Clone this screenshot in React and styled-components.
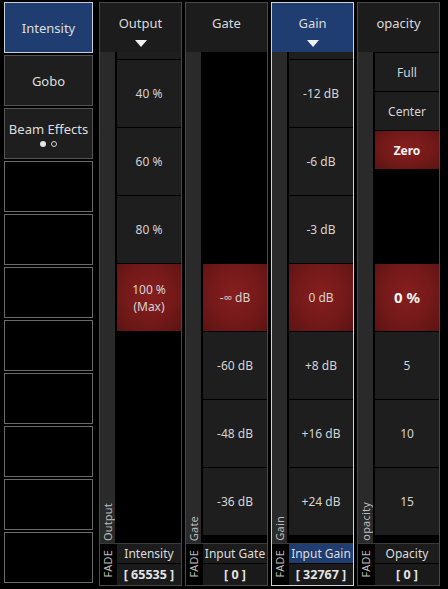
import React from "react";
import styled, { createGlobalStyle } from "styled-components";

const GlobalStyle = createGlobalStyle`
  html, body {
    margin: 0;
    padding: 0;
    background: #000;
    overflow: hidden;
  }
  body {
    font-family: "Noto Sans", "Open Sans", sans-serif;
    color: #d6d6d6;
  }
`;

const Page = styled.div`
  display: flex;
  gap: 6px;
  padding: 2px 0 0 4px;
  width: 448px;
  height: 589px;
  box-sizing: border-box;
`;

const Tabs = styled.div`
  display: flex;
  flex-direction: column;
  gap: 2px;
  width: 89px;
`;

const Tab = styled.div`
  height: 51px;
  box-sizing: border-box;
  border: 1px solid ${(p) => (p.$active ? "#c9cfda" : p.$empty ? "#6a6a6a" : "#555")};
  background: ${(p) => (p.$active ? "#1f3d70" : p.$empty ? "#000" : "#1e1e1e")};
  color: #dedede;
  font-size: 13px;
  display: flex;
  flex-direction: column;
  align-items: center;
  justify-content: center;
`;

const Dots = styled.div`
  display: flex;
  align-items: center;
  gap: 5px;
  margin-top: 3px;
`;

const Dot = styled.span`
  width: ${(p) => (p.$on ? 6 : 4)}px;
  height: ${(p) => (p.$on ? 6 : 4)}px;
  border-radius: 50%;
  background: ${(p) => (p.$on ? "#e8e8e8" : "transparent")};
  border: ${(p) => (p.$on ? "none" : "1px solid #d0d0d0")};
`;

const Columns = styled.div`
  display: flex;
  gap: 3px;
`;

const Column = styled.div`
  width: 83px;
  height: 584px;
  box-sizing: border-box;
  border: 1px solid ${(p) => (p.$sel ? "#d2d2d2" : "#484848")};
  background: #000;
  display: flex;
  flex-direction: column;
`;

const Header = styled.div`
  height: 49px;
  flex: none;
  background: ${(p) => (p.$sel ? "#1f3d70" : "#1c1c1c")};
  display: flex;
  flex-direction: column;
  align-items: center;
  padding-top: 12px;
  box-sizing: border-box;
`;

const Title = styled.span`
  font-size: 13px;
  color: #dadada;
  line-height: 16px;
`;

const Arrow = styled.div`
  flex: none;
  width: 0;
  height: 0;
  margin-top: 9px;
  border-left: 6px solid transparent;
  border-right: 6px solid transparent;
  border-top: 7px solid #f2f2f2;
`;

const Body = styled.div`
  flex: 1;
  display: flex;
  gap: 2px;
  overflow: hidden;
`;

const Strip = styled.div`
  width: 15px;
  flex: none;
  background: ${(p) => (p.$dark ? "#000" : "#2a2a2a")};
  display: flex;
  flex-direction: column;
  justify-content: flex-end;
  align-items: center;
`;

const SideText = styled.span`
  writing-mode: vertical-rl;
  transform: rotate(180deg);
  font-size: 11px;
  color: #bdbdbd;
  padding-top: ${(p) => p.$pad || 3}px;
  line-height: 13px;
  letter-spacing: 0.2px;
`;

const List = styled.div`
  flex: 1;
  display: flex;
  flex-direction: column;
  gap: 1px;
  margin-top: ${(p) => p.$offset}px;
`;

const Cell = styled.div`
  height: ${(p) => p.$h || 67}px;
  flex: none;
  display: flex;
  align-items: center;
  justify-content: center;
  text-align: center;
  font-size: ${(p) => (p.$big ? 15 : 12)}px;
  font-weight: ${(p) => (p.$bold ? 700 : 400)};
  line-height: 17px;
  color: ${(p) => (p.$bold ? "#f4f4f4" : "#d4d4d4")};
  background: ${(p) =>
    p.$red
      ? "radial-gradient(ellipse at 50% 45%, #861e1e 0%, #741919 55%, #5c1313 100%)"
      : p.$blank
      ? "#000"
      : "#1e1e1e"};
`;

const Footer = styled.div`
  height: 41px;
  flex: none;
  border-top: 1px solid #3a3a3a;
  display: flex;
  gap: 2px;
`;

const Labels = styled.div`
  flex: 1;
  display: flex;
  flex-direction: column;
  gap: 1px;
`;

const Name = styled.div`
  height: 19px;
  background: ${(p) => (p.$sel ? "#1f3d70" : "#1c1c1c")};
  font-size: 12px;
  color: #dcdcdc;
  display: flex;
  align-items: center;
  justify-content: center;
`;

const Value = styled.div`
  flex: 1;
  background: #1a1a1a;
  font-size: 12.5px;
  font-weight: 700;
  color: #e4e4e4;
  display: flex;
  align-items: center;
  justify-content: center;
  white-space: pre;
`;

// slot 0 of each scrolled list sits mostly above the visible area, so it carries no text
const columns = [
  {
    title: "Output",
    arrow: true,
    side: "Output",
    name: "Intensity",
    value: "[ 65535 ]",
    offset: -60,
    cells: [
      {},
      { t: "40 %" },
      { t: "60 %" },
      { t: "80 %" },
      { t: ["100 %", "(Max)"], red: true },
    ],
  },
  {
    title: "Gate",
    side: "Gate",
    name: "Input Gate",
    value: "[ 0 ]",
    offset: -60,
    cells: [
      { blank: true },
      { blank: true },
      { blank: true },
      { blank: true },
      { t: "-∞ dB", red: true },
      { t: "-60 dB" },
      { t: "-48 dB" },
      { t: "-36 dB" },
    ],
  },
  {
    title: "Gain",
    arrow: true,
    sel: true,
    side: "Gain",
    name: "Input Gain",
    value: "[ 32767 ]",
    offset: -60,
    cells: [
      {},
      { t: "-12 dB" },
      { t: "-6 dB" },
      { t: "-3 dB" },
      { t: "0 dB", red: true },
      { t: "+8 dB" },
      { t: "+16 dB" },
      { t: "+24 dB" },
    ],
  },
  {
    title: "opacity",
    side: "opacity",
    name: "Opacity",
    value: "[ 0 ]",
    offset: 1,
    cells: [
      { t: "Full", h: 38 },
      { t: "Center", h: 38 },
      { t: "Zero", h: 38, red: true, bold: true },
      { blank: true, h: 93 },
      { t: "0 %", red: true, bold: true, big: true },
      { t: "5" },
      { t: "10" },
      { t: "15" },
    ],
  },
];

const tabs = ["Intensity", "Gobo", "Beam Effects"];

export default function App() {
  return (
    <>
      <GlobalStyle />
      <Page>
        <Tabs>
          {tabs.map((t, i) => (
            <Tab key={t} $active={i === 0}>
              <span>{t}</span>
              {t === "Beam Effects" && (
                <Dots>
                  <Dot $on />
                  <Dot />
                </Dots>
              )}
            </Tab>
          ))}
          {Array.from({ length: 8 }).map((_, i) => (
            <Tab key={i} $empty />
          ))}
        </Tabs>
        <Columns>
          {columns.map((c) => (
            <Column key={c.title} $sel={c.sel}>
              <Header $sel={c.sel}>
                <Title>{c.title}</Title>
                {c.arrow && <Arrow />}
              </Header>
              <Body>
                <Strip>
                  <SideText $pad={2}>{c.side}</SideText>
                </Strip>
                <List $offset={c.offset}>
                  {c.cells.map((cell, i) => (
                    <Cell
                      key={i}
                      $h={cell.h}
                      $red={cell.red}
                      $blank={cell.blank}
                      $bold={cell.bold}
                      $big={cell.big}
                    >
                      {Array.isArray(cell.t) ? (
                        <span>
                          {cell.t[0]}
                          <br />
                          {cell.t[1]}
                        </span>
                      ) : (
                        cell.t
                      )}
                    </Cell>
                  ))}
                </List>
              </Body>
              <Footer>
                <Strip $dark>
                  <SideText $pad={8}>FADE</SideText>
                </Strip>
                <Labels>
                  <Name $sel={c.sel}>{c.name}</Name>
                  <Value>{c.value}</Value>
                </Labels>
              </Footer>
            </Column>
          ))}
        </Columns>
      </Page>
    </>
  );
}
